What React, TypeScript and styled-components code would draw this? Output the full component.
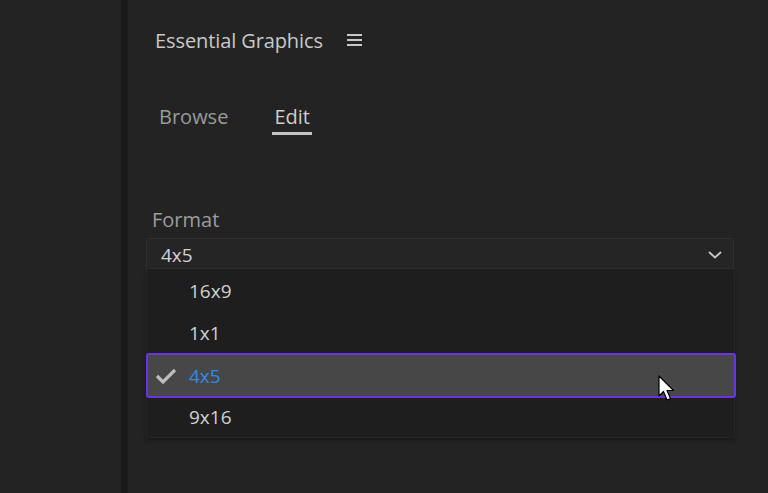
import styled, { createGlobalStyle } from "styled-components";

const GlobalStyle = createGlobalStyle`
  html, body {
    margin: 0;
    padding: 0;
    background: #232323;
    font-family: "Open Sans", "Noto Sans", sans-serif;
  }
`;

const Screen = styled.div`
  display: flex;
  width: 768px;
  height: 493px;
  overflow: hidden;
  background: #232323;
`;

const SidePanel = styled.div`
  width: 121px;
  flex-shrink: 0;
  background: #232323;
`;

const Divider = styled.div`
  width: 7px;
  flex-shrink: 0;
  background: #191919;
`;

const Main = styled.div`
  flex: 1;
  display: flex;
  flex-direction: column;
  padding: 24px 34px 0 18px;
`;

const Header = styled.div`
  display: flex;
  align-items: center;
  gap: 23px;
  padding-left: 9px;
  height: 32px;
`;

const Title = styled.div`
  font-size: 20px;
  letter-spacing: -0.1px;
  color: #c9c9c9;
`;

const MenuIcon = styled.svg`
  width: 18px;
  height: 14px;
`;

const Tabs = styled.div`
  display: flex;
  gap: 46px;
  padding-left: 13px;
  margin-top: 45px;
`;

const Tab = styled.div<{ $active?: boolean }>`
  position: relative;
  font-size: 20px;
  height: 34px;
  line-height: 32px;
  color: ${(p) => (p.$active ? "#cdcdcd" : "#9a9a9a")};
  &::after {
    content: "";
    display: ${(p) => (p.$active ? "block" : "none")};
    position: absolute;
    left: -2px;
    right: -2px;
    bottom: 0;
    height: 3px;
    background: #c4c4c4;
  }
`;

const Field = styled.div`
  display: flex;
  flex-direction: column;
  margin-top: 73px;
`;

const Label = styled.div`
  font-size: 20px;
  color: #9c9c9c;
  padding-left: 6px;
  height: 30px;
  line-height: 24px;
`;

const Select = styled.div`
  display: flex;
  align-items: center;
  justify-content: space-between;
  height: 31px;
  box-sizing: border-box;
  border: 1px solid #2f2f2f;
  border-radius: 3px 3px 0 0;
  background: #252525;
  padding: 2px 10px 0 14px;
  font-size: 19px;
  color: #d2d2d2;
`;

const Chevron = styled.svg`
  width: 16px;
  height: 10px;
`;

const List = styled.div`
  position: relative;
  display: flex;
  flex-direction: column;
  padding-top: 1px;
  background: #1e1e1e;
  border: 1px solid #262626;
  border-top: none;
  margin-right: -1px;
  box-shadow: 0 2px 4px rgba(0, 0, 0, 0.35);
`;

const Item = styled.div<{ $selected?: boolean; $last?: boolean }>`
  display: flex;
  align-items: center;
  box-sizing: border-box;
  padding-left: ${(p) => (p.$selected ? "7px" : "42px")};
  gap: 12px;
  font-size: 19px;
  color: ${(p) => (p.$selected ? "#2d8ceb" : "#d0d0d0")};
  background: ${(p) => (p.$selected ? "#474747" : "transparent")};
  border: ${(p) => (p.$selected ? "2.5px solid #6c32e4" : "none")};
  border-radius: ${(p) => (p.$selected ? "3px" : "0")};
  margin: ${(p) => (p.$selected ? "-1px -2px -1px -1px" : "0")};
  height: ${(p) => (p.$selected ? "45px" : p.$last ? "40px" : "42px")};
`;

const Check = styled.svg`
  width: 22px;
  height: 18px;
`;

const Cursor = styled.svg`
  position: absolute;
  left: 511px;
  top: 106px;
  width: 18px;
  height: 27px;
`;

const formats = ["16x9", "1x1", "4x5", "9x16"];
const current = "4x5";

export default function App() {
  return (
    <>
      <GlobalStyle />
      <Screen>
        <SidePanel />
        <Divider />
        <Main>
          <Header>
            <Title>Essential Graphics</Title>
            <MenuIcon viewBox="0 0 18 14">
              <rect x="1" y="1" width="15" height="2" fill="#c9c9c9" />
              <rect x="1" y="6" width="15" height="2" fill="#c9c9c9" />
              <rect x="1" y="11" width="15" height="2" fill="#c9c9c9" />
            </MenuIcon>
          </Header>
          <Tabs>
            <Tab>Browse</Tab>
            <Tab $active>Edit</Tab>
          </Tabs>
          <Field>
            <Label>Format</Label>
            <Select>
              <span>{current}</span>
              <Chevron viewBox="0 0 16 10">
                <path d="M2 2 L8 7.5 L14 2" fill="none" stroke="#c4c4c4" strokeWidth="2" />
              </Chevron>
            </Select>
            <List>
              {formats.map((f, i) =>
                f === current ? (
                  <Item key={f} $selected>
                    <Check viewBox="0 0 22 18">
                      <path
                        d="M2 9 L8 15 L20 3"
                        fill="none"
                        stroke="#bdbdbd"
                        strokeWidth="3.2"
                      />
                    </Check>
                    <span>{f}</span>
                  </Item>
                ) : (
                  <Item key={f} $last={i === formats.length - 1}>
                    {f}
                  </Item>
                )
              )}
              <Cursor viewBox="0 0 18 27">
                <path
                  d="M1 1 L1 21 L5.5 16.5 L9 25 L12.5 23.5 L9 15.5 L15.5 15.5 Z"
                  fill="#ffffff"
                  stroke="#000000"
                  strokeWidth="1.2"
                  strokeLinejoin="round"
                />
              </Cursor>
            </List>
          </Field>
        </Main>
      </Screen>
    </>
  );
}
